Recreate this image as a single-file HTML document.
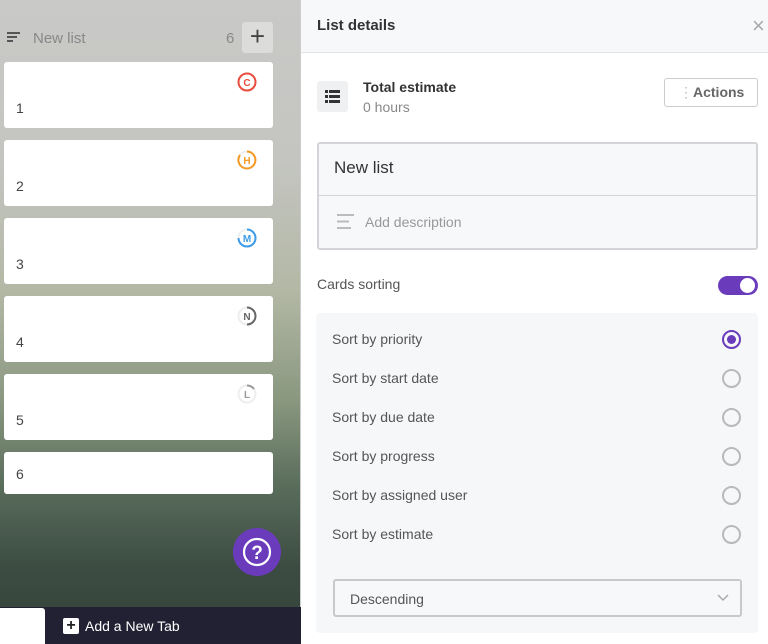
<!DOCTYPE html>
<html><head><style>
*{box-sizing:border-box;margin:0;padding:0}
body{width:768px;height:644px;overflow:hidden;position:relative;font-family:"Liberation Sans",sans-serif;background:#fff}
.bg{position:absolute;left:0;top:0;width:301px;height:644px;background:linear-gradient(180deg,#c9c9c7 0%,#c4c5c1 25%,#b3b8a5 45%,#8a9880 62%,#5b6e5c 75%,#3c4c42 88%,#33423a 100%)}
.card{position:absolute;left:4px;width:269px;background:#fff;border-radius:3px;font-size:14px;color:#444}
.card span{position:absolute;left:12px;bottom:12px}
.pi{position:absolute;left:233px;top:10px}
.bar{position:absolute;left:0;top:607px;width:301px;height:37px;background:#222133}
.panel{position:absolute;left:301px;top:0;width:467px;height:644px;background:#fff}
.hdr{height:53px;background:#f7f8f9;border-bottom:1px solid #e2e4e6}
.t{position:absolute;font-size:14px;color:#333}
.row{position:absolute;left:31px;font-size:14px;color:#555}
.rad{position:absolute;left:421px;width:19px;height:19px;border:2px solid #b9b9b9;border-radius:50%}
</style></head><body>
<div class="bg"></div>
<div style="position:absolute;left:300px;top:0;width:1px;height:644px;background:#ccc"></div>
<svg style="position:absolute;left:7px;top:31px" width="14" height="12"><rect x="0" y="1" width="13" height="2" fill="#555"/><rect x="0" y="5" width="10" height="2" fill="#555"/><rect x="0" y="9" width="6" height="2" fill="#555"/></svg>
<div class="t" style="left:33px;top:30px;color:#888;font-size:15px">New list</div>
<div class="t" style="left:226px;top:30px;color:#888;font-size:15px">6</div>
<div style="position:absolute;left:242px;top:22px;width:31px;height:31px;background:#dcdcdb;border-radius:3px;color:#444;font-size:26px;text-align:center;line-height:29px">+</div>
<div class="card" style="top:62px;height:66px"><svg class="pi" width="20" height="20"><circle cx="10" cy="10" r="8.5" fill="#fff" stroke="#e94c3c" stroke-width="2"/><text x="10" y="14" font-size="10" font-weight="bold" text-anchor="middle" fill="#e94c3c" font-family="Liberation Sans">C</text></svg><span>1</span></div>
<div class="card" style="top:140px;height:66px"><svg class="pi" width="20" height="20"><circle cx="10" cy="10" r="8.5" fill="#fff" stroke="#eee" stroke-width="2"/><path d="M10 1.5A8.5 8.5 0 1 1 3 5" fill="none" stroke="#f39a26" stroke-width="2"/><text x="10" y="14" font-size="10" font-weight="bold" text-anchor="middle" fill="#f39a26" font-family="Liberation Sans">H</text></svg><span>2</span></div>
<div class="card" style="top:218px;height:66px"><svg class="pi" width="20" height="20"><circle cx="10" cy="10" r="8.5" fill="#fff" stroke="#eee" stroke-width="2"/><path d="M10 1.5A8.5 8.5 0 1 1 1.5 10" fill="none" stroke="#3d9be9" stroke-width="2"/><text x="10" y="14" font-size="10" font-weight="bold" text-anchor="middle" fill="#3d9be9" font-family="Liberation Sans">M</text></svg><span>3</span></div>
<div class="card" style="top:296px;height:66px"><svg class="pi" width="20" height="20"><circle cx="10" cy="10" r="8.5" fill="#fff" stroke="#eee" stroke-width="2"/><path d="M10 1.5A8.5 8.5 0 0 1 10 18.5" fill="none" stroke="#666" stroke-width="2"/><text x="10" y="14" font-size="10" font-weight="bold" text-anchor="middle" fill="#666" font-family="Liberation Sans">N</text></svg><span>4</span></div>
<div class="card" style="top:374px;height:66px"><svg class="pi" width="20" height="20"><circle cx="10" cy="10" r="8.5" fill="#fff" stroke="#eee" stroke-width="2"/><path d="M10 1.5A8.5 8.5 0 0 1 17 5" fill="none" stroke="#999" stroke-width="2"/><text x="10" y="14" font-size="10" font-weight="bold" text-anchor="middle" fill="#999" font-family="Liberation Sans">L</text></svg><span>5</span></div>
<div class="card" style="top:452px;height:42px"><span>6</span></div>
<div style="position:absolute;left:233px;top:528px;width:48px;height:48px;border-radius:50%;background:#6a3cbc"><svg width="48" height="48"><circle cx="24" cy="24" r="13" fill="none" stroke="#fff" stroke-width="2.2"/><text x="24" y="31" font-size="19" font-weight="bold" text-anchor="middle" fill="#fff" font-family="Liberation Sans">?</text></svg></div>
<div class="bar"></div>
<div style="position:absolute;left:0;top:608px;width:45px;height:36px;background:#fff;border-radius:0 3px 0 0"></div>
<div style="position:absolute;left:63px;top:618px;width:16px;height:16px;background:#fff;border-radius:2px;color:#222;font-size:16px;font-weight:bold;text-align:center;line-height:16px">+</div>
<div class="t" style="left:85px;top:618px;color:#fff;font-size:14px">Add a New Tab</div>

<div class="panel">
<div class="hdr"></div>
<div class="t" style="left:16px;top:17px;font-weight:bold;font-size:15px">List details</div>
<div class="t" style="left:451px;top:13px;font-size:22px;color:#aaa">×</div>
<div style="position:absolute;left:16px;top:81px;width:31px;height:31px;background:#eff0f2;border-radius:3px"><svg width="31" height="31"><g fill="#333"><rect x="8" y="9" width="3" height="3"/><rect x="12" y="9" width="11" height="3"/><rect x="8" y="14" width="3" height="3"/><rect x="12" y="14" width="11" height="3"/><rect x="8" y="19" width="3" height="3"/><rect x="12" y="19" width="11" height="3"/></g></svg></div>
<div class="t" style="left:62px;top:79px;font-weight:bold;font-size:14px">Total estimate</div>
<div class="t" style="left:62px;top:99px;color:#888;font-size:14px">0 hours</div>
<div style="position:absolute;left:363px;top:78px;width:94px;height:29px;border:1px solid #ccc;border-radius:3px;font-size:14px;font-weight:bold;color:#666;line-height:27px;padding-left:28px">Actions<span style="position:absolute;left:14px;top:0;color:#bbb;font-weight:normal">⋮</span></div>
<div style="position:absolute;left:16px;top:142px;width:441px;height:108px;border:2px solid #d3d5d8;border-radius:3px;background:#f7f8f9"><div style="height:52px;border-bottom:1.5px solid #d3d5d8"></div></div>
<div class="t" style="left:33px;top:158px;font-size:17px;color:#333">New list</div>
<svg style="position:absolute;left:36px;top:213px" width="18" height="18"><rect x="0" y="1" width="17" height="2" fill="#bbb"/><rect x="0" y="7.5" width="12" height="2" fill="#bbb"/><rect x="0" y="14" width="14" height="2" fill="#bbb"/></svg>
<div class="t" style="left:64px;top:214px;color:#999;font-size:14px">Add description</div>
<div class="t" style="left:16px;top:276px;color:#555;font-size:14px">Cards sorting</div>
<div style="position:absolute;left:417px;top:276px;width:40px;height:19px;border-radius:10px;background:#6a3cbc"><div style="position:absolute;right:3px;top:2px;width:15px;height:15px;border-radius:50%;background:#fff"></div></div>
<div style="position:absolute;left:15px;top:313px;width:442px;height:320px;background:#f6f7f9;border-radius:4px"></div>
<div class="row" style="top:331px">Sort by priority</div>
<div class="row" style="top:370px">Sort by start date</div>
<div class="row" style="top:409px">Sort by due date</div>
<div class="row" style="top:448px">Sort by progress</div>
<div class="row" style="top:487px">Sort by assigned user</div>
<div class="row" style="top:526px">Sort by estimate</div>
<div class="rad" style="top:330px;border-color:#6a3cbc"><div style="position:absolute;left:3px;top:3px;width:9px;height:9px;border-radius:50%;background:#6a3cbc"></div></div>
<div class="rad" style="top:369px"></div>
<div class="rad" style="top:408px"></div>
<div class="rad" style="top:447px"></div>
<div class="rad" style="top:486px"></div>
<div class="rad" style="top:525px"></div>
<div style="position:absolute;left:32px;top:579px;width:409px;height:38px;border:2px solid #c9c9c9;border-radius:3px;background:#f7f8f9"></div>
<div class="t" style="left:49px;top:591px;color:#555;font-size:14px">Descending</div>
<svg style="position:absolute;left:416px;top:594px" width="12" height="8"><path d="M1 1L6 6L11 1" fill="none" stroke="#aaa" stroke-width="1.5"/></svg>
</div>
</body></html>
